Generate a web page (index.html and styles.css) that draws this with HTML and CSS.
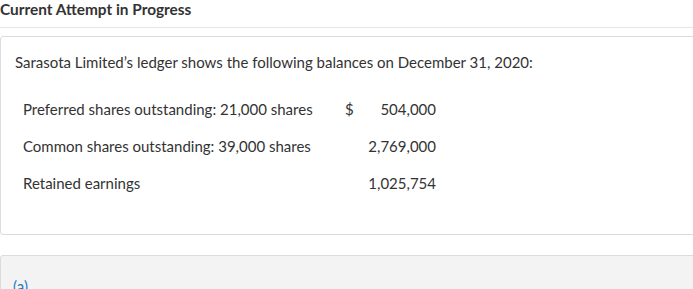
FILE: index.html
```html
<!DOCTYPE html>
<html>
<head>
<meta charset="utf-8">
<link rel="stylesheet" href="styles.css">
</head>
<body>
<div class="page">
  <h2 class="title">Current Attempt in Progress</h2>
  <div class="card">
    <p class="intro">Sarasota Limited’s ledger shows the following balances on December 31, 2020:</p>
    <table class="ledger">
      <tr><td class="label">Preferred shares outstanding: 21,000 shares</td><td class="cur">$</td><td class="amt">504,000</td></tr>
      <tr><td class="label">Common shares outstanding: 39,000 shares</td><td class="cur"></td><td class="amt">2,769,000</td></tr>
      <tr><td class="label">Retained earnings</td><td class="cur"></td><td class="amt">1,025,754</td></tr>
    </table>
  </div>
  <div class="part">
    <span class="part-label">(a)</span>
  </div>
</div>
</body>
</html>
```
FILE: styles.css
```css
html, body {
  margin: 0;
  padding: 0;
  background: #fff;
}
body {
  font-family: Lato, "Liberation Sans", sans-serif;
  color: #333;
  overflow: hidden;
}
.page {
  width: 700px;
}
.title {
  margin: 0;
  padding: 1px 0 9px 0;
  font-size: 15.4px;
  font-weight: 700;
  line-height: 17px;
  color: #333;
  border-bottom: 1px solid #e5e5e5;
}
.card {
  margin-top: 8px;
  border: 1px solid #dcdcdc;
  border-radius: 3px;
  height: 199px;
  box-sizing: border-box;
  padding: 15px 14px;
}
.intro {
  margin: 0;
  font-size: 15px;
  line-height: 20px;
}
.ledger {
  margin-top: 18px;
  margin-left: 8px;
  border-collapse: collapse;
  font-size: 15px;
}
.ledger td {
  padding: 0;
  height: 37px;
  line-height: 20px;
  vertical-align: middle;
}
.label {
  width: 322px;
}
.cur {
  width: 16px;
}
.amt {
  width: 75px;
  text-align: right;
}
.part {
  margin-top: 20px;
  border: 1px solid #dcdcdc;
  border-radius: 3px;
  background: #f3f3f3;
  height: 60px;
  padding: 20px 12px;
  box-sizing: border-box;
}
.part-label {
  color: #1a7bc4;
  font-size: 15px;
}
```
